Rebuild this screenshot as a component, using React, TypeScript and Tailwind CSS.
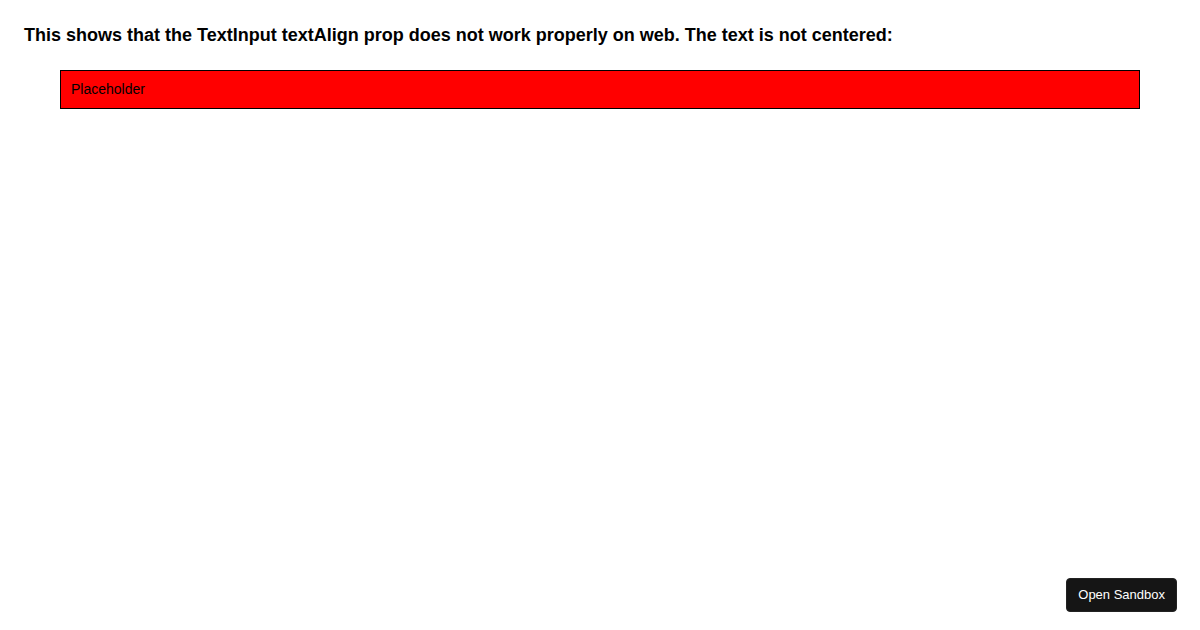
// App.tsx
import React from 'react';

export default function App() {
  return (
    <div className="font-['Liberation_Sans',Arial,sans-serif] text-black">
      <main className="flex flex-col">
        {/* Title */}
        <h1 className="px-6 pt-6 text-lg leading-[22px] font-bold">
          This shows that the TextInput textAlign prop does not work properly on web. The text is not centered:
        </h1>

        {/* Input */}
        <input
          type="text"
          aria-label="Placeholder"
          placeholder="Placeholder"
          className="mx-[60px] mt-6 border border-black bg-[#ff0000] p-[10px] text-sm leading-[17px] placeholder:text-black"
        />
      </main>

      {/* Sandbox link */}
      <a
        href="#"
        className="fixed right-[23px] bottom-[18px] rounded border border-[#222222] bg-[#151515] px-[11px] py-2 text-[13px] leading-4 text-white"
      >
        Open Sandbox
      </a>
    </div>
  );
}
